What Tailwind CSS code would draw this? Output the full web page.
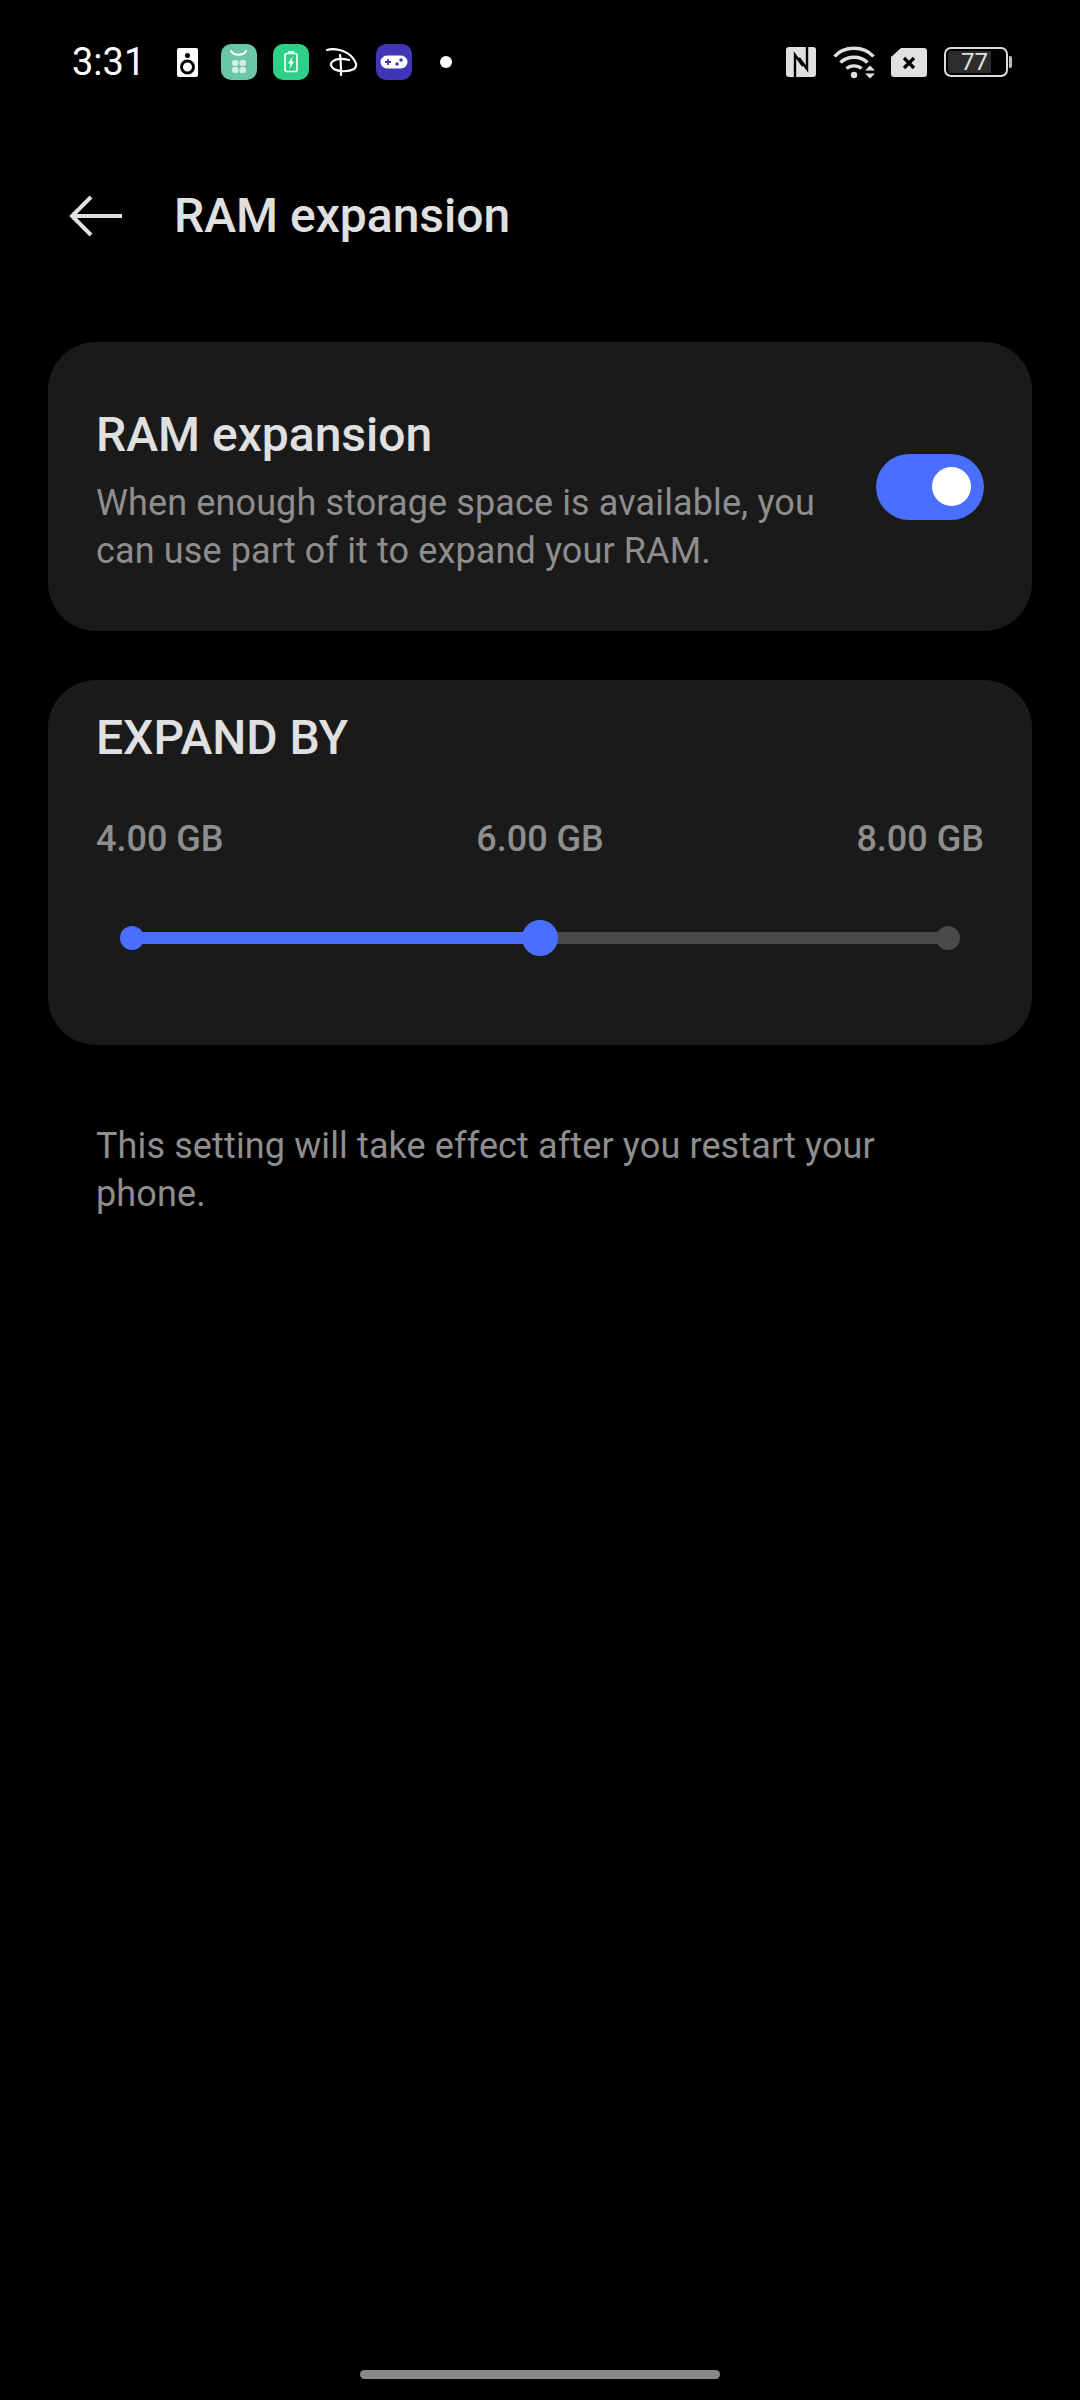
<!DOCTYPE html>
<html lang="en">
  <head>
    <meta charset="UTF-8" />
    <title>RAM expansion</title>
    <script src="https://cdn.jsdelivr.net/npm/@tailwindcss/browser@4"></script>
  </head>
  <body class="bg-black font-['Roboto',sans-serif] w-[1080px] h-[2400px] overflow-hidden relative">
    <!-- Status bar -->
    <div class="h-[124px] pl-[72px] pr-[68px] flex items-center justify-between">
      <div class="flex items-center">
        <span class="text-[38px] leading-[48px] text-white w-[105px]">3:31</span>
        <!-- Speaker -->
        <svg class="w-[21px] h-[29px]" viewBox="0 0 21 29">
          <rect width="21" height="29" rx="2" fill="#fff" />
          <circle cx="10.5" cy="7.500" r="2.500" fill="#000" />
          <circle cx="10.5" cy="19" r="6" fill="none" stroke="#000" stroke-width="3" />
        </svg>
        <!-- Mint app -->
        <svg class="w-[36px] h-[36px] ml-[23px]" viewBox="0 0 36 36">
          <rect width="36" height="36" rx="10" fill="#6ac8a6" />
          <path d="M10 7c3 5 12 5 15 0" fill="none" stroke="#fff" stroke-width="2" stroke-linecap="round" />
          <g fill="#d2efe4">
            <rect x="11" y="16" width="6.500" height="6" rx="2.500" />
            <rect x="18.500" y="16" width="6.500" height="6" rx="2.500" />
            <rect x="11" y="23" width="6.500" height="6" rx="2.500" />
            <rect x="18.500" y="23" width="6.500" height="6" rx="2.500" />
          </g>
        </svg>
        <!-- Battery app -->
        <svg class="w-[36px] h-[36px] ml-[16px]" viewBox="0 0 36 36">
          <rect width="36" height="36" rx="10" fill="#2ed088" />
          <rect x="12" y="9.500" width="12" height="18" rx="2" fill="none" stroke="#fff" stroke-width="1.6" />
          <rect x="15" y="7" width="6" height="2.400" fill="#fff" />
          <path d="M19.500 12.500l-4.500 7h2.500l-1 5.500 4.500-7.500h-2.500z" fill="#fff" />
        </svg>
        <!-- Disney -->
        <svg class="w-[32px] h-[30px] ml-[17px]" viewBox="0 0 32 30">
          <path d="M1 3C8 1 19 3 25 9c5 5 7 10 3 13-5 3-15 3-20 0-3-2-4-5-2-7 3-3 9-4 17-2" fill="none" stroke="#fff" stroke-width="2.200" stroke-linecap="round" />
          <path d="M14 8c1 6 1 13 1 20" fill="none" stroke="#fff" stroke-width="2.200" stroke-linecap="round" />
        </svg>
        <!-- Game app -->
        <svg class="w-[36px] h-[36px] ml-[18px]" viewBox="0 0 36 36">
          <rect width="36" height="36" rx="10" fill="#3f37b5" />
          <rect x="4.500" y="11.500" width="27" height="13" rx="6.500" fill="#fff" />
          <path d="M9 18h6M12 15v6" stroke="#3f37b5" stroke-width="1.800" />
          <circle cx="25" cy="16" r="1.700" fill="#3f37b5" /><circle cx="21" cy="20" r="1.700" fill="#3f37b5" />
        </svg>
        <span class="w-[12px] h-[12px] rounded-full bg-white ml-[28px]"></span>
      </div>
      <div class="flex items-center">
        <!-- NFC -->
        <svg class="w-[30px] h-[30px]" viewBox="0 0 30 30">
          <rect width="30" height="30" rx="3" fill="#e0e0e0" />
          <path d="M9 30V8l8 11M21 0v22l-8-11" fill="none" stroke="#000" stroke-width="2.400" />
        </svg>
        <!-- Wifi -->
        <svg class="w-[44px] h-[35px] ml-[17px]" viewBox="0 0 44 35">
          <g fill="none" stroke="#e0e0e0" stroke-width="3.400">
            <path d="M1.500 11.500C11 .5 31 .5 40.500 11.500" />
            <path d="M7.500 17.500c7-7 20-7 27 0" />
            <path d="M13.500 23.500c4-3.500 11-3.500 15 0" />
          </g>
          <circle cx="21" cy="30" r="3.200" fill="#e0e0e0" />
          <path d="M32 25.500l5-5 5 5zM32 28.500l5 5 5-5z" fill="#e0e0e0" />
        </svg>
        <!-- SIM -->
        <svg class="w-[36px] h-[29px] ml-[14px]" viewBox="0 0 36 29">
          <path d="M10 0h23a3 3 0 0 1 3 3v23a3 3 0 0 1-3 3H3a3 3 0 0 1-3-3V9z" fill="#e0e0e0" />
          <path d="M13 10l10 10M23 10L13 20" stroke="#000" stroke-width="3.200" />
        </svg>
        <!-- Battery -->
        <div class="ml-[17px] flex items-center">
          <div class="relative w-[64px] h-[30px] rounded-[7px] border-[2px] border-[#dcdcdc]">
            <div class="absolute left-[2px] top-[2px] bottom-[2px] w-[43px] rounded-l-[4px] bg-[#2c2c2c]"></div>
            <span class="absolute inset-0 flex items-center justify-center pr-[3px] text-[24px] leading-[26px] text-[#e0e0e0]">77</span>
          </div>
          <div class="w-[3px] h-[12px] rounded-r-[2px] bg-[#bdbdbd] ml-[1px]"></div>
        </div>
      </div>
    </div>

    <!-- Header -->
    <div class="h-[92px] mt-[46px] flex items-center">
      <svg class="w-[54px] h-[42px] ml-[69px]" viewBox="0 0 54 42">
        <path d="M53 21H3M22 2L3 21l19 19" fill="none" stroke="#e0e0e0" stroke-width="4" />
      </svg>
      <h1 class="ml-[51px] text-[48px] leading-[60px] font-medium text-[#e0e0e0]">RAM expansion</h1>
    </div>

    <div class="px-[48px] pt-[80px]">
      <!-- Toggle card -->
      <div class="h-[289px] rounded-[48px] bg-[#1a1a1a] px-[48px] flex items-center justify-between">
        <div class="pt-[6px]">
          <h2 class="text-[48px] leading-[60px] font-medium text-[#e0e0e0]">RAM expansion</h2>
          <p class="text-[36px] leading-[48px] tracking-[0.12px] text-[#8e8e8e] w-[740px] mt-[14px]">When enough storage space is available, you can use part of it to expand your RAM.</p>
        </div>
        <div class="w-[108px] h-[66px] rounded-full bg-[#4a6eff] flex items-center justify-end pr-[13px]">
          <span class="w-[39px] h-[39px] rounded-full bg-white"></span>
        </div>
      </div>

      <!-- Slider card -->
      <div class="h-[365px] mt-[49px] rounded-[48px] bg-[#1a1a1a] px-[48px] pt-[28px]">
        <h2 class="text-[48px] leading-[60px] font-medium text-[#e0e0e0]">EXPAND BY</h2>
        <div class="mt-[47px] flex justify-between text-[36px] leading-[48px] font-medium text-[#8e8e8e]">
          <span>4.00 GB</span>
          <span>6.00 GB</span>
          <span>8.00 GB</span>
        </div>
        <div class="relative mt-[69px] mx-[36px] h-[12px] flex">
          <div class="w-1/2 h-full bg-[#4a6eff]"></div>
          <div class="w-1/2 h-full bg-[#4a4a4a]"></div>
          <span class="absolute left-[-12px] top-[-6px] w-[24px] h-[24px] rounded-full bg-[#4a6eff]"></span>
          <span class="absolute left-1/2 top-[-12px] -ml-[18px] w-[36px] h-[36px] rounded-full bg-[#4a6eff]"></span>
          <span class="absolute right-[-12px] top-[-6px] w-[24px] h-[24px] rounded-full bg-[#4a4a4a]"></span>
        </div>
      </div>

      <p class="mt-[77px] px-[48px] text-[36px] leading-[48px] tracking-[0.12px] text-[#8e8e8e]">This setting will take effect after you restart your phone.</p>
    </div>

    <!-- Home indicator -->
    <div class="absolute left-[360px] top-[2370px] w-[360px] h-[9px] rounded-full bg-[#888888]"></div>
  </body>
</html>
